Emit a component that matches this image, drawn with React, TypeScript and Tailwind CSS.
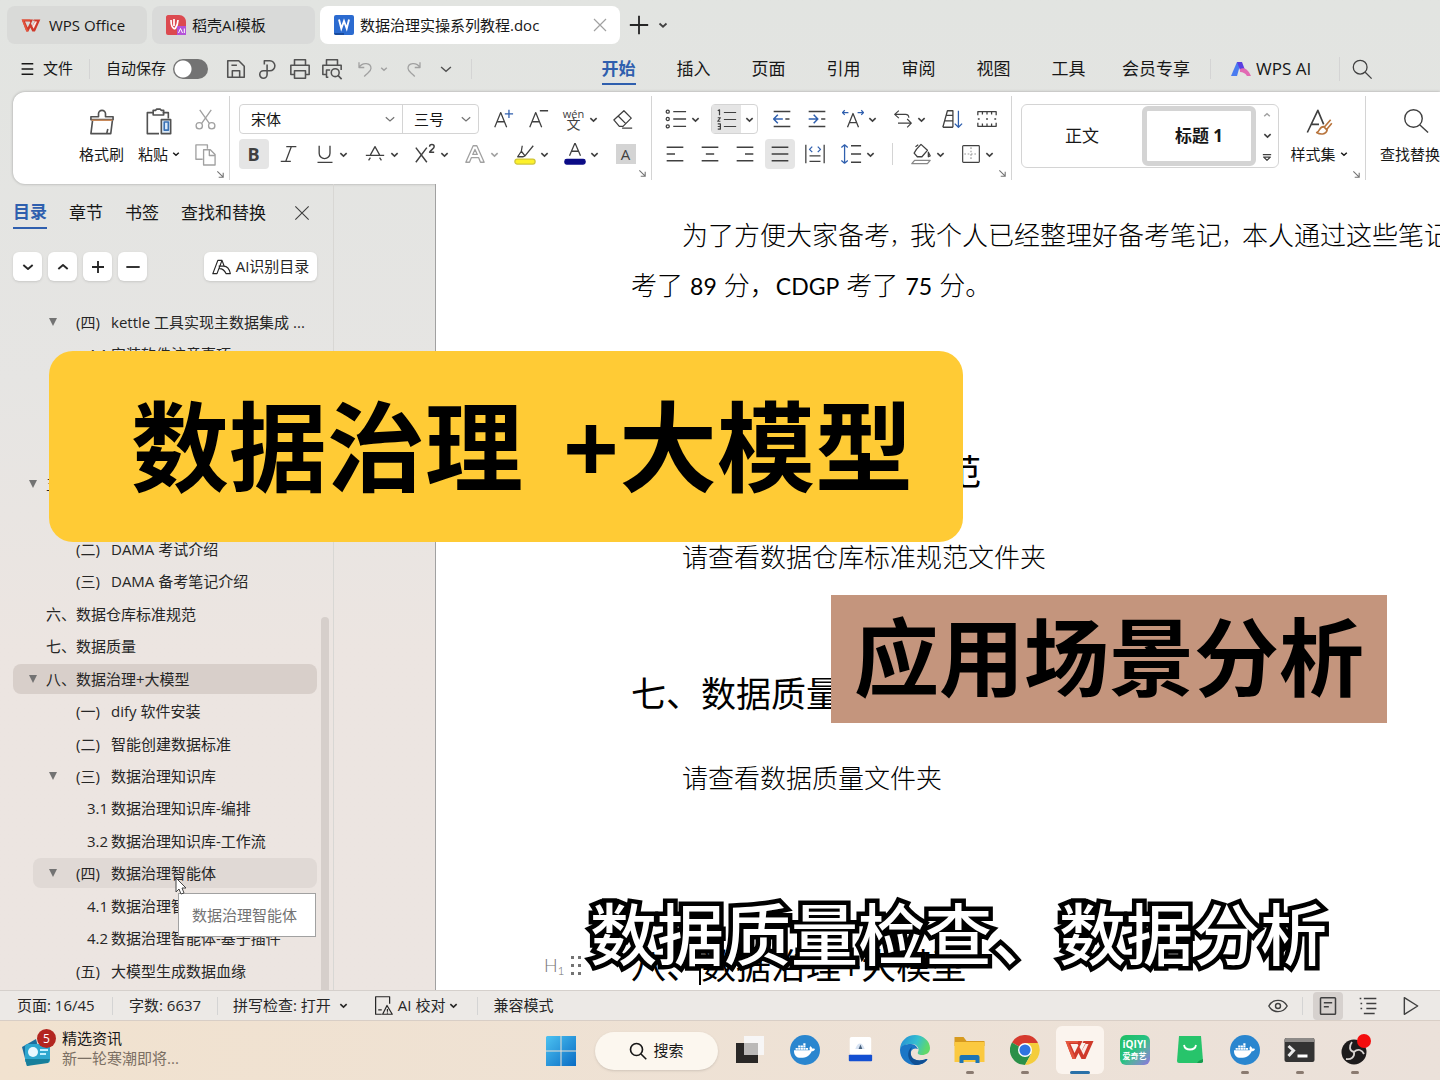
import type { ReactNode } from "react";
import { FaDocker } from "react-icons/fa";

type IconProps = {
	children: ReactNode;
	className?: string;
};

// 24 grid line icon
function Icon({ children, className = "size-[22px]" }: IconProps) {
	return (
		<svg
			viewBox="0 0 24 24"
			className={`shrink-0 ${className}`}
			fill="none"
			stroke="currentColor"
			strokeWidth="1.4"
			strokeLinejoin="round"
			aria-hidden="true"
		>
			{children}
		</svg>
	);
}

function Caret({ className = "size-[9px]" }: { className?: string }) {
	return (
		<svg
			viewBox="0 0 10 10"
			className={`shrink-0 ${className}`}
			fill="none"
			stroke="currentColor"
			strokeWidth="1.8"
			aria-hidden="true"
		>
			<path d="M1.5 3.5 5 6.7l3.5-3.2" />
		</svg>
	);
}

type ToolProps = {
	label: string;
	children: ReactNode;
	caret?: boolean;
	active?: boolean;
	muted?: boolean;
};

function Tool({ label, children, caret, active, muted }: ToolProps) {
	return (
		<button
			type="button"
			aria-label={label}
			className={`flex h-[30px] shrink-0 items-center justify-center gap-1 ${
				caret ? "w-[50px]" : "w-[35px]"
			} ${muted ? "text-neutral-400" : "text-neutral-700"}`}
		>
			<span
				className={`flex items-center justify-center rounded ${
					active ? "size-[30px] bg-neutral-200" : ""
				}`}
			>
				{children}
			</span>
			{caret && <Caret />}
		</button>
	);
}

function Corner() {
	return (
		<svg
			viewBox="0 0 10 10"
			className="mr-1 size-[9px] self-end text-neutral-500"
			fill="none"
			stroke="currentColor"
			strokeWidth="1.2"
			aria-hidden="true"
		>
			<path d="M1.5 1.5 8 8M8 3v5H3" />
		</svg>
	);
}

function Divider({ className = "h-6" }: { className?: string }) {
	return <div className={`w-px shrink-0 bg-neutral-300 ${className}`} />;
}

function WpsMark({ className }: { className: string }) {
	return (
		<svg viewBox="0 0 30 22" className={className} aria-hidden="true">
			<path
				d="M1 2h17l-3 6-2-3H6l4 9 4-8 3 6 4-8h-3l1-2h10l-8 18h-4l-3-6-3 6H8z"
				fill="#cf3a2b"
			/>
			<path d="m17 12 2 4 5-11h-3z" fill="#fbe9e5" />
			<path d="m1 2 7 18h3L4 4h9l1-2z" fill="#e5573f" />
		</svg>
	);
}

function TopTabs() {
	return (
		<div className="flex h-12 shrink-0 items-center gap-[5px] px-[7px] pt-0.5 text-[15px]">
			<button
				type="button"
				className="flex h-[38px] w-[140px] items-center gap-2 rounded-lg bg-[#d9dad8] pl-[14px]"
			>
				<WpsMark className="h-[15px] w-5" />
				WPS Office
			</button>
			<button
				type="button"
				className="flex h-[38px] w-[163px] items-center gap-[6px] rounded-lg bg-[#d9dad9] pl-[14px]"
			>
				<svg viewBox="0 0 20 20" className="size-5" aria-hidden="true">
					<path d="M2 0h11c4 0 7 3 7 7v13H2a2 2 0 0 1-2-2V2c0-1 1-2 2-2z" fill="#dc4a50" />
					<path d="M11 11h9v9h-9z" fill="#b453d8" />
					<path
						d="M5 5c0 6 1 8 4 9M8 4v7M12 5c0 3-1 6-3 9"
						stroke="#fff"
						strokeWidth="1.7"
						fill="none"
					/>
					<path d="m12.500 18 2-4.500 2 4.500M18.300 13.500V18" stroke="#fff" fill="none" />
				</svg>
				稻壳AI模板
			</button>
			<div className="flex h-[38px] w-[300px] items-center rounded-lg bg-white pl-[14px] pr-3">
				<svg viewBox="0 0 20 20" className="mr-[6px] size-5" aria-hidden="true">
					<rect width="20" height="20" rx="2" fill="#2b6bd0" />
					<path d="M0 18h10v2H2a2 2 0 0 1-2-2z" fill="#184a9c" />
					<path
						d="m5 4.500 2.300 9L10 6l2.700 7.500 2.300-9"
						stroke="#fff"
						strokeWidth="1.900"
						fill="none"
					/>
				</svg>
				<span className="flex-1 whitespace-nowrap">数据治理实操系列教程.doc</span>
				<button type="button" aria-label="关闭标签" className="text-neutral-400">
					<Icon className="size-4">
						<path d="m3 3 18 18M21 3 3 21" strokeWidth="1.800" />
					</Icon>
				</button>
			</div>
			<button type="button" aria-label="新建" className="ml-[3px] text-neutral-800">
				<Icon className="size-[22px]">
					<path d="M12 2v20M2 12h20" strokeWidth="2" />
				</Icon>
			</button>
			<button type="button" aria-label="标签列表" className="ml-[3px] text-neutral-700">
				<Caret className="size-[10px]" />
			</button>
		</div>
	);
}

const menus = ["开始", "插入", "页面", "引用", "审阅", "视图", "工具"];

function MenuBar() {
	return (
		<div className="flex h-11 shrink-0 items-center pb-[3px] text-[17px]">
			<button type="button" className="ml-[21px] flex items-center gap-2 text-[15px]">
				<Icon className="size-[14px]">
					<path d="M1 3h20M1 12h20M1 21h20" strokeWidth="2.200" />
				</Icon>
				文件
			</button>
			<Divider className="ml-4 h-5" />
			<label htmlFor="autosave" className="ml-4 text-[15px]">
				自动保存
			</label>
			<input
				id="autosave"
				type="checkbox"
				role="switch"
				className="ml-[7px] h-5 w-[35px] appearance-none rounded-full bg-neutral-500 bg-[radial-gradient(circle_at_10px_10px,white_8px,transparent_9px)]"
			/>
			<div className="ml-3 flex items-center text-neutral-600">
				<button type="button" aria-label="保存" className="flex w-8 justify-center">
					<Icon>
						<path d="M3 21V3h12l6 6v12zM8 21v-7h8v7M7 8h6" strokeWidth="1.700" />
					</Icon>
				</button>
				<button type="button" aria-label="输出为PDF" className="flex w-8 justify-center">
					<Icon>
						<path
							d="M8 7V3h6a5 5 0 0 1 0 11h-4M11 7v11a4 4 0 1 1-4-4h5"
							strokeWidth="1.700"
						/>
					</Icon>
				</button>
				<button type="button" aria-label="打印" className="flex w-8 justify-center">
					<Icon>
						<path d="M6 8V2h12v6M6 18H2V8h20v10h-4M6 14h12v8H6z" strokeWidth="1.700" />
					</Icon>
				</button>
				<button type="button" aria-label="打印预览" className="flex w-8 justify-center">
					<Icon>
						<path d="M6 8V2h12v6M6 18H2V8h20v5M8 21H6v-8h4" strokeWidth="1.700" />
						<circle cx="15.500" cy="16" r="4.300" strokeWidth="1.700" />
						<path d="m18.500 19 4 4" strokeWidth="1.700" />
					</Icon>
				</button>
				<button
					type="button"
					aria-label="撤销"
					className="ml-2 flex w-[34px] items-center gap-1.5 text-neutral-400"
				>
					<Icon className="size-[18px]">
						<path d="M4 3v7h7M4 10c5-8 16-6 16 1 0 5-5 6-9 11" strokeWidth="1.700" />
					</Icon>
					<Caret className="size-2" />
				</button>
				<button
					type="button"
					aria-label="恢复"
					className="ml-3 flex w-6 justify-center text-neutral-400"
				>
					<Icon className="size-[18px]">
						<path d="M20 3v7h-7M20 10C15 2 4 4 4 11c0 5 5 6 9 11" strokeWidth="1.700" />
					</Icon>
				</button>
				<button type="button" aria-label="更多" className="ml-2 flex w-6 justify-center">
					<Caret className="size-[14px] stroke-1" />
				</button>
				<Divider className="ml-[13px] h-5" />
			</div>
			<nav className="ml-[109px] flex items-center">
				{menus.map((m, i) => (
					<button type="button" key={m} className="flex w-[75px] justify-center">
						<span
							className={
								i === 0
									? "-mb-1 border-b-2 border-[#2f5fae] pb-0.5 font-bold leading-6 text-[#2f5fae]"
									: ""
							}
						>
							{m}
						</span>
					</button>
				))}
				<button type="button" className="w-[100px] text-center">
					会员专享
				</button>
			</nav>
			<Divider className="ml-1 h-5" />
			<button type="button" className="ml-5 flex items-center gap-[5px] whitespace-nowrap">
				<svg viewBox="0 0 20 16" className="h-4 w-5" aria-hidden="true">
					<path d="M6 1h4l-4 14H0z" fill="#4a7cf0" />
					<path d="M6 1h5l3 8H9z" fill="#5a3fe0" />
					<path d="M9 8c4-2 8 0 11 7h-4c-2-3-4-4-7-4z" fill="#e26ab4" />
				</svg>
				WPS AI
			</button>
			<Divider className="ml-7 h-6" />
			<button type="button" aria-label="搜索" className="ml-[11px] text-neutral-700">
				<Icon>
					<circle cx="10" cy="10" r="7.500" />
					<path d="m15.500 15.500 7 7" />
				</Icon>
			</button>
		</div>
	);
}

function Ribbon() {
	return (
		<div className="ml-[13px] flex h-[92px] shrink-0 overflow-hidden rounded-l-xl bg-white text-[15px] shadow-[0_0_3px_rgba(0,0,0,0.3)]">
			<div className="flex w-[216px] shrink-0 flex-col pt-3">
				<div className="flex h-[66px] pl-[62px]">
					<button type="button" className="flex w-[53px] flex-col items-center gap-2">
						<Icon className="mt-1 size-[28px] text-neutral-600">
							<path d="M2.500 10V7.500h6.500V5a3 3 0 0 1 6 0v2.500h6.500V10zM4 10 2.500 22h17L21 10M16 22l1-4" />
							<path d="M3 10.500h18" stroke="#c98a5b" />
						</Icon>
						<span className="leading-5">格式刷</span>
					</button>
					<button type="button" className="ml-[3px] flex w-[56px] flex-col items-center gap-2">
						<Icon className="mt-1 size-[28px] text-neutral-600">
							<path d="M7 4H2v18h10M15 4h5v5M7 2h2l1-1h3l1 1h2v4H7z" />
							<rect x="14" y="10" width="8" height="12" fill="#dcebfa" />
							<rect x="16.500" y="12" width="3.500" height="7" stroke="#3a72b5" />
						</Icon>
						<span className="flex items-center gap-1 whitespace-nowrap leading-5">
							粘贴
							<Caret className="size-2" />
						</span>
					</button>
					<div className="flex flex-col gap-[5px] text-neutral-400">
						<button type="button" aria-label="剪切" className="flex h-[30px] w-9 items-center justify-center">
							<Icon className="size-[23px]">
								<path d="m6 2 10 14M18 2 8 16" />
								<circle cx="5.500" cy="18.500" r="3.300" />
								<circle cx="18.500" cy="18.500" r="3.300" />
							</Icon>
						</button>
						<button type="button" aria-label="复制" className="flex h-[30px] w-9 items-center justify-center">
							<Icon className="size-[23px]">
								<path d="M9 17H2V2h12v4M10 7h7l5 5v11H10zM16 7v6h6" />
							</Icon>
						</button>
					</div>
				</div>
				<Corner />
			</div>
			<Divider className="mt-1 h-[84px]" />
			<div className="flex w-[421px] shrink-0 flex-col pl-[9px] pt-3">
				<div className="mb-[5px] flex h-[30px]">
					<div className="mr-[6px] flex h-[30px] w-[240px] rounded border border-neutral-300">
						<div className="flex w-[163px] items-center border-r border-neutral-300 pr-[6px]">
							<select aria-label="字体" className="flex-1 appearance-none pl-[11px] outline-none">
								<option>宋体</option>
							</select>
							<Caret className="size-3 stroke-1 text-neutral-500" />
						</div>
						<div className="flex flex-1 items-center pr-[6px]">
							<select aria-label="字号" className="w-12 flex-1 appearance-none pl-[11px] outline-none">
								<option>三号</option>
							</select>
							<Caret className="size-3 stroke-1 text-neutral-500" />
						</div>
					</div>
					<Tool label="增大字号">
						<Icon>
							<path d="m3 21 6.500-16L16 21M5.500 15h8" />
							<path d="M18.500 2v9M14 6.500h9" stroke="#2f5fae" />
						</Icon>
					</Tool>
					<Tool label="减小字号">
						<Icon>
							<path d="m3 21 6.500-16L16 21M5.500 15h8M14 3h9" />
						</Icon>
					</Tool>
					<Tool label="拼音指南" caret>
						<span className="flex w-[22px] flex-col items-center text-[11px] leading-[9px]">
							<span>wén</span>
							<span className="text-[14px] leading-3">文</span>
						</span>
					</Tool>
					<Tool label="清除格式">
						<Icon>
							<path d="m2 13 11-10 8 8-9 9H8zM7 9l8 8M11 22h11" />
						</Icon>
					</Tool>
				</div>
				<div className="-ml-[3px] flex h-[30px]">
					<Tool label="加粗" active>
						<span className="text-[18px] font-bold">B</span>
					</Tool>
					<Tool label="倾斜">
						<Icon>
							<path d="M9 4h11M3 20h11M14.500 4l-6 16" />
						</Icon>
					</Tool>
					<Tool label="下划线" caret>
						<Icon className="size-[20px]">
							<path d="M5 2v9a6.500 6.500 0 0 0 13 0V2M3 22h18" strokeWidth="1.600" />
						</Icon>
					</Tool>
					<Tool label="删除线" caret>
						<Icon>
							<path d="m7 13 5-9 5 9M5 19l2-3M19 19l-2-3M2 13.500h20" />
						</Icon>
					</Tool>
					<Tool label="上标" caret>
						<Icon>
							<path d="m2 5 12 16M14 5 2 21M17 4c0-3 5-3 5 0 0 2-3 3-5 6h5" strokeWidth="1.600" />
						</Icon>
					</Tool>
					<Tool label="文字效果" caret muted>
						<Icon>
							<path d="M2 21 10 3h4l8 18h-4l-2-5H8l-2 5zM9.500 12.500h5L12 7z" />
						</Icon>
					</Tool>
					<Tool label="突出显示" caret>
						<Icon>
							<path d="m8 9 4 5 9-11M8 9l-4 6h6l2-1M9 3 8 9" />
							<rect x="1" y="17.500" width="22" height="5.500" rx="2.500" fill="#fdf12a" stroke="#cfc53a" />
						</Icon>
					</Tool>
					<Tool label="字体颜色" caret>
						<Icon>
							<path d="m6 14 6-14 6 14M8.500 9h7" />
							<rect x="1" y="18" width="22" height="5" rx="2" fill="#0b0b86" stroke="#0b0b86" />
						</Icon>
					</Tool>
					<Tool label="字符底纹">
						<span className="ml-1 flex size-5 items-center justify-center bg-neutral-300 text-[15px]">
							A
						</span>
					</Tool>
				</div>
				<Corner />
			</div>
			<Divider className="mt-1 h-[84px]" />
			<div className="flex w-[359px] shrink-0 flex-col pl-[5px] pt-3">
				<div className="mb-[5px] flex h-[30px]">
					<Tool label="项目符号" caret>
						<Icon>
							<path d="M9 4h14M9 12h14M9 20h14" />
							<circle cx="3" cy="4" r="1.700" />
							<circle cx="3" cy="12" r="1.700" />
							<circle cx="3" cy="20" r="1.700" />
						</Icon>
					</Tool>
					<button
						type="button"
						aria-label="编号"
						className="ml-1 mr-[6px] flex h-[30px] w-[47px] items-center rounded border border-neutral-300 text-neutral-700"
					>
						<span className="flex h-full w-[29px] items-center justify-center bg-neutral-200">
							<Icon className="size-[21px]">
								<path d="M9 4h14M9 12h14M9 20h14M2 2l2-1v6M2 10h3l-3 4h3M2 17h3v6H2M2 20h3" />
							</Icon>
						</span>
						<Caret className="ml-1 size-[9px]" />
					</button>
					<Tool label="减少缩进">
						<Icon className="size-5">
							<path d="M2 3h20M16 12h5M2 21h20" strokeWidth="1.800" />
							<path d="M13 12H2m5-5-5 5 5 5" stroke="#2f5fae" strokeWidth="1.800" />
						</Icon>
					</Tool>
					<Tool label="增加缩进">
						<Icon className="size-5">
							<path d="M2 3h20M17 12h5M2 21h20" strokeWidth="1.800" />
							<path d="M2 12h11M8 7l5 5-5 5" stroke="#2f5fae" strokeWidth="1.800" />
						</Icon>
					</Tool>
					<Tool label="中文版式" caret>
						<Icon>
							<path d="m6 21 6-15 6 15M8 16h8" />
							<path d="M1 5h6M3 2.500.500 5 3 7.500M17 5h6M21 2.500 23.500 5 21 7.500" stroke="#2f5fae" />
						</Icon>
					</Tool>
					<Tool label="换行" caret>
						<Icon className="size-[20px]">
							<path d="M7 2 2 6.500 7 11M2 6.500h13a4 4 0 0 1 4 4M17 12l5 5-5 5M22 17H6" />
						</Icon>
					</Tool>
					<Tool label="排序">
						<Icon>
							<path d="M2 21 7 3h6v18M4 14h9M2 21h11M6 8h7" />
							<path d="M19 3v18m-4-4 4 4 4-4" stroke="#2f5fae" />
						</Icon>
					</Tool>
					<Tool label="制表位">
						<Icon>
							<path d="M2 8V4h20v4M2 16v4h20v-4M7 4v3M12 4v3M17 4v3M7 20v-3M12 20v-3M17 20v-3M2 12h2M11 12h2M20 12h2" />
						</Icon>
					</Tool>
				</div>
				<div className="flex h-[30px]">
					<Tool label="左对齐">
						<Icon className="size-5">
							<path d="M2 4h20M2 12h10M2 20h20" strokeWidth="1.800" />
						</Icon>
					</Tool>
					<Tool label="居中">
						<Icon className="size-5">
							<path d="M2 4h20M7 12h10M2 20h20" strokeWidth="1.800" />
						</Icon>
					</Tool>
					<Tool label="右对齐">
						<Icon className="size-5">
							<path d="M2 4h20M12 12h10M2 20h20" strokeWidth="1.800" />
						</Icon>
					</Tool>
					<Tool label="两端对齐" active>
						<Icon className="size-5">
							<path d="M2 4h20M2 12h20M2 20h20" strokeWidth="1.800" />
						</Icon>
					</Tool>
					<Tool label="分散对齐">
						<Icon>
							<path d="M2 2v20M22 2v20M6 14h12M6 20h12" />
							<path d="m9 4-3 3 3 3M15 4l3 3-3 3" stroke="#2f5fae" />
						</Icon>
					</Tool>
					<Tool label="行距" caret>
						<Icon>
							<path d="M12 3h11M12 12h11M12 21h11" />
							<path d="M5 2v20M1.500 5 5 2l3.500 3M1.500 19 5 22l3.500-3" stroke="#2f5fae" />
						</Icon>
					</Tool>
					<div className="flex w-5 items-center justify-center">
						<Divider className="h-[22px]" />
					</div>
					<Tool label="底纹颜色" caret>
						<Icon>
							<path d="M7 7 12 1.500l7 6.500-6 7H8L4.500 11 7 7M6 4l3-2M20 10l2 4-2 1z" />
							<path d="M2 22.500 5 19h17l-3 3.500z" stroke="#888" />
						</Icon>
					</Tool>
					<Tool label="边框" caret>
						<Icon className="size-5">
							<rect x="2" y="2" width="20" height="20" rx="1" />
							<path d="M12 4v16M4 12h16" strokeDasharray="2 2" stroke="#999" />
						</Icon>
					</Tool>
				</div>
				<Corner />
			</div>
			<Divider className="mt-1 h-[84px]" />
			<div className="flex w-[353px] shrink-0 flex-col pl-[9px] pt-3">
				<div className="flex h-[66px]">
					<div className="flex h-16 w-[258px] items-center rounded-md border border-neutral-300 text-[17px]">
						<button type="button" className="w-[120px] text-center">
							正文
						</button>
						<button
							type="button"
							className="h-[60px] w-[114px] rounded-md border-[5px] border-neutral-300 font-bold"
						>
							标题 1
						</button>
						<div className="flex flex-1 flex-col items-center gap-3 text-neutral-700">
							<Caret className="size-2 rotate-180 text-neutral-400" />
							<Caret className="size-[9px]" />
							<Icon className="size-[10px]">
								<path d="M2 6h20M4 12h16l-8 8z" strokeWidth="3" />
							</Icon>
						</div>
					</div>
					<button type="button" className="ml-[10px] flex w-[60px] flex-col items-center gap-2">
						<Icon className="mt-1 size-[28px] text-neutral-700">
							<path d="M2 21 11 2l5 12M5 14h7" />
							<path d="m22 10-6 7M23 13l-5 6M16 16c-4 0-3 4-6 5 3 2 8 2 9-2z" stroke="#b8743c" />
						</Icon>
						<span className="flex items-center gap-1 whitespace-nowrap leading-5">
							样式集
							<Caret className="size-2" />
						</span>
					</button>
				</div>
				<Corner />
			</div>
			<Divider className="mt-1 h-[84px]" />
			<button
				type="button"
				className="ml-[14px] flex w-[74px] shrink-0 flex-col items-center gap-2 pt-3"
			>
				<Icon className="mt-1 size-[28px] text-neutral-700">
					<circle cx="9" cy="9" r="7.500" strokeWidth="1.200" />
					<path d="m14.500 14.500 7 6.500" strokeWidth="1.200" />
				</Icon>
				<span className="flex items-center gap-[5px] whitespace-nowrap leading-5">
					查找替换
					<Caret />
				</span>
			</button>
		</div>
	);
}

type OutlineItem = {
	level: 1 | 2 | 3;
	no?: string;
	text?: string;
	open?: boolean;
	state?: "current" | "hover";
};

const outline: OutlineItem[] = [
	{ level: 2, no: "(四)", text: "kettle 工具实现主数据集成 ...", open: true },
	{ level: 3, no: "4.1", text: "安装软件注意事项" },
	{ level: 3 },
	{ level: 3 },
	{ level: 2 },
	{ level: 1, no: "五、", open: true },
	{ level: 2 },
	{ level: 2, no: "(二)", text: "DAMA 考试介绍" },
	{ level: 2, no: "(三)", text: "DAMA 备考笔记介绍" },
	{ level: 1, no: "六、", text: "数据仓库标准规范" },
	{ level: 1, no: "七、", text: "数据质量" },
	{ level: 1, no: "八、", text: "数据治理+大模型", open: true, state: "current" },
	{ level: 2, no: "(一)", text: "dify 软件安装" },
	{ level: 2, no: "(二)", text: "智能创建数据标准" },
	{ level: 2, no: "(三)", text: "数据治理知识库", open: true },
	{ level: 3, no: "3.1", text: "数据治理知识库-编排" },
	{ level: 3, no: "3.2", text: "数据治理知识库-工作流" },
	{ level: 2, no: "(四)", text: "数据治理智能体", open: true, state: "hover" },
	{ level: 3, no: "4.1", text: "数据治理智能体-知识库" },
	{ level: 3, no: "4.2", text: "数据治理智能体-基于插件" },
	{ level: 2, no: "(五)", text: "大模型生成数据血缘" },
];

const indent = { 1: "pl-[14px]", 2: "ml-5 pl-[14px]", 3: "ml-5 pl-[54px]" };
const noWidth = { 1: "w-[30px]", 2: "w-[35px]", 3: "w-[24px]" };
const arrowGap = { 1: "mr-[7px]", 2: "mr-[17px]", 3: "mr-[17px]" };
const rowState = { current: "bg-[#d8cfca]", hover: "bg-[#e0d9d5]", none: "" };

function Sidebar() {
	return (
		<aside className="flex w-[334px] shrink-0 flex-col border-r border-[#d8d7d4] pl-[13px]">
			<div className="mt-[13px] flex h-8 items-center gap-[22px] text-[17px]">
				<button
					type="button"
					className="border-b-2 border-[#2f5fae] font-bold leading-[30px] text-[#2f5fae]"
				>
					目录
				</button>
				<button type="button">章节</button>
				<button type="button">书签</button>
				<button type="button">查找和替换</button>
				<button type="button" aria-label="关闭" className="ml-[6px] text-neutral-700">
					<Icon className="size-4">
						<path d="m2 2 20 20M22 2 2 22" strokeWidth="1.700" />
					</Icon>
				</button>
			</div>
			<div className="mr-4 mt-[23px] flex h-[29px] items-center gap-[6px] text-neutral-800">
				{[
					["展开", "m5 9 7 6 7-6"],
					["收起", "m5 15 7-6 7 6"],
					["升级", "M12 3v18M3 12h18"],
					["降级", "M2 12h20"],
				].map(([label, d]) => (
					<button
						type="button"
						key={label}
						aria-label={label}
						className="flex size-[29px] items-center justify-center rounded-md bg-white shadow-sm"
					>
						<Icon className="size-4">
							<path d={d} strokeWidth="2.800" />
						</Icon>
					</button>
				))}
				<button
					type="button"
					className="ml-auto flex h-[29px] w-[113px] items-center justify-center gap-1 whitespace-nowrap rounded-md bg-white text-[15px] shadow-sm"
				>
					<Icon className="size-5">
						<path d="M7 4h5L6 20H1zM12 4l3 8M8 11h6c4 0 7 4 8 9h-5c-2-4-4-6-8-6" />
					</Icon>
					AI识别目录
				</button>
			</div>
			<div className="mt-[25px] flex min-h-0 flex-1">
				<ul className="grid flex-1 auto-rows-fr pb-[3px] text-[15px] text-neutral-800">
					{outline.map((item, i) => (
						<li key={i} className="flex items-center">
							<div
								className={`flex h-[30px] flex-1 items-center whitespace-nowrap rounded-lg ${
									indent[item.level]
								} ${rowState[item.state ?? "none"]}`}
							>
								{item.level < 3 && (
									<svg
										viewBox="0 0 10 8"
										className={`h-2 w-3 shrink-0 ${arrowGap[item.level]} ${
											item.open ? "text-neutral-500" : "text-transparent"
										}`}
										fill="currentColor"
										aria-hidden="true"
									>
										<path d="M1 0h8L5 8z" />
									</svg>
								)}
								{item.no && (
									<span className={`shrink-0 ${noWidth[item.level]}`}>{item.no}</span>
								)}
								<span>{item.text}</span>
							</div>
						</li>
					))}
				</ul>
				<div className="mx-1 flex w-2 flex-col justify-end">
					<div className="h-[373px] rounded-t-full bg-[#d6cfcb]" />
				</div>
			</div>
		</aside>
	);
}

function Doc() {
	return (
		<main className="ml-[101px] flex-1 overflow-hidden border-l border-neutral-400 bg-white pl-[195px] font-['Lato','Noto_Sans_CJK_SC',sans-serif] text-[26px] font-light text-black">
			<p className="mt-[26px] whitespace-nowrap pl-[51px] leading-[50px]">
				为了方便大家备考<span className="text-[20px] leading-none">，</span>
				我个人已经整理好备考笔记<span className="text-[20px] leading-none">，</span>
				本人通过这些笔记
			</p>
			<p className="whitespace-nowrap leading-[50px]">
				考了 <span className="text-[23px] font-normal leading-none">89</span> 分，
				<span className="text-[23px] font-normal leading-none">CDGP</span> 考了{" "}
				<span className="text-[23px] font-normal leading-none">75</span> 分。
			</p>
			<h1 className="mt-[136px] whitespace-nowrap text-[35px] font-normal leading-[50px]">
				六、数据仓库标准规范
			</h1>
			<p className="mt-[36px] whitespace-nowrap pl-[51px] leading-[50px]">
				请查看数据仓库标准规范文件夹
			</p>
			<h1 className="mt-[86px] whitespace-nowrap text-[35px] font-normal leading-[50px]">
				七、数据质量
			</h1>
			<p className="mt-[35px] whitespace-nowrap pl-[51px] leading-[50px]">
				请查看数据质量文件夹
			</p>
			<div className="-ml-[87px] mt-[137px] flex items-center">
				<span className="w-[26px] text-[18px] text-neutral-500">
					H<sub className="text-[12px]">1</sub>
				</span>
				<svg viewBox="0 0 12 20" className="mr-[49px] h-5 w-3 fill-neutral-500" aria-hidden="true">
					{[2, 10, 18].map((y) => (
						<path key={y} d={`M1 ${y - 1}h3v3H1zM8 ${y - 1}h3v3H8z`} />
					))}
				</svg>
				<h1 className="flex items-center whitespace-nowrap text-[35px] font-normal leading-[50px]">
					八、
					<span className="-ml-0.5 h-10 w-0.5 bg-black" />
					数据治理+大模型
				</h1>
			</div>
		</main>
	);
}

function StatusBar() {
	return (
		<footer className="flex h-[30px] shrink-0 items-center whitespace-nowrap border-t border-[#d5d0cc] bg-[#ece9e6] pl-[17px] text-[15px] text-neutral-800">
			<span className="w-[95px]">页面: 16/45</span>
			<Divider className="h-[18px]" />
			<span className="ml-4 w-[88px]">字数: 6637</span>
			<Divider className="h-[18px]" />
			<button type="button" className="ml-[15px] flex items-center gap-2">
				拼写检查: 打开 <Caret />
			</button>
			<button type="button" className="ml-[25px] flex items-center gap-1">
				<Icon className="size-[21px]">
					<path d="M10 22H3V2h16v8M8 22H3M6 17h4M16 12l-5 10h11zM16.500 16v3M16.500 20v1" />
				</Icon>
				AI 校对 <Caret />
			</button>
			<Divider className="ml-[19px] h-[18px]" />
			<span className="ml-[15px]">兼容模式</span>
			<div className="ml-auto flex items-center pr-[19px] text-neutral-700">
				<button type="button" aria-label="护眼模式" className="mr-[14px]">
					<Icon className="size-5">
						<path d="M1 12c5-9 17-9 22 0-5 9-17 9-22 0z" strokeWidth="1.700" />
						<circle cx="12" cy="12" r="3" strokeWidth="1.700" />
					</Icon>
				</button>
				<Divider className="h-[18px]" />
				<button
					type="button"
					aria-label="页面视图"
					className="ml-[10px] flex h-7 w-[30px] items-center justify-center rounded bg-[#d6d1ce]"
				>
					<Icon className="size-[20px]">
						<rect x="3" y="2" width="18" height="20" rx="1" strokeWidth="1.800" />
						<path d="M7 8h10M7 13h6" strokeWidth="1.800" />
					</Icon>
				</button>
				<button type="button" aria-label="大纲视图" className="ml-[15px]">
					<Icon className="size-5">
						<path d="M7 3h15M10 9h12M10 15h12M7 21h13M2 3h2M3 9h2M3 15h2" strokeWidth="1.700" />
					</Icon>
				</button>
				<button type="button" aria-label="播放" className="ml-[23px]">
					<Icon className="size-5">
						<path d="M4 2v20l16-10z" strokeWidth="1.700" />
					</Icon>
				</button>
			</div>
		</footer>
	);
}

type AppIconProps = {
	name: string;
	children: ReactNode;
	running?: boolean;
	focused?: boolean;
};

function AppIcon({ name, children, running, focused }: AppIconProps) {
	return (
		<button
			type="button"
			aria-label={name}
			className="flex h-full w-[55px] shrink-0 items-center justify-center pb-0.5"
		>
			<span
				className={`flex h-[48px] w-[48px] flex-col items-center justify-between rounded-md pt-[9px] ${
					focused ? "bg-[#fbf4ee]" : ""
				}`}
			>
				<span className="flex h-[31px] items-center justify-center">{children}</span>
				<span
					className={`h-[3px] rounded-full ${focused ? "w-5 bg-[#2a71a8]" : "w-2"} ${
						running ? "bg-[#8a7a70]" : ""
					}`}
				/>
			</span>
		</button>
	);
}

function DockerIcon() {
	return (
		<span className="flex size-[30px] items-center justify-center rounded-full bg-[#2a86cf] text-white">
			<FaDocker className="size-[21px]" />
		</span>
	);
}

function Taskbar() {
	return (
		<div className="flex h-[60px] shrink-0 items-center border-t border-[#d8cec6] bg-linear-to-r from-[#f1e2cf] to-[#ebe1da] text-[15px]">
			<button
				type="button"
				className="flex w-[533px] shrink-0 items-center pb-[5px] pl-[22px] text-left"
			>
				<span className="relative mr-[10px] mt-1 flex h-[34px] w-[30px] items-end">
					<svg viewBox="0 0 28 30" className="h-[30px] w-7" aria-hidden="true">
						<path d="M0 10 14 2l6 22L5 29z" fill="#1b6f9f" />
						<rect x="3" y="7" width="25" height="19" rx="3" fill="#2ea7cf" />
						<path d="M5 29 3 22h25l-2 4z" fill="#177f9b" />
						<circle cx="11" cy="15" r="5" fill="#e8f8ff" />
						<path d="M18 13h8M18 17h6" stroke="#bfefff" strokeWidth="2" />
					</svg>
					<span className="absolute -right-1 -top-1 flex size-[19px] items-center justify-center rounded-full bg-[#b3261f] text-[12px] text-white">
						5
					</span>
				</span>
				<span className="leading-5">
					<span className="block text-neutral-900">精选资讯</span>
					<span className="block text-[#7b6f63]">新一轮寒潮即将...</span>
				</span>
			</button>
			<button type="button" aria-label="开始菜单" className="flex w-[56px] justify-center">
				<svg viewBox="0 0 30 30" className="size-[30px]" aria-hidden="true">
					<defs>
						<linearGradient id="win" x1="0" y1="0" x2="1" y2="1">
							<stop offset="0" stopColor="#4cc2f1" />
							<stop offset="1" stopColor="#0a6cc4" />
						</linearGradient>
					</defs>
					<path
						d="M1 0h13.500v14.500H0V1zM15.500 0H30v14.500H15.500zM0 15.500h14.500V30H0zM15.500 15.500H30V30H15.500z"
						fill="url(#win)"
					/>
				</svg>
			</button>
			<button
				type="button"
				className="ml-[6px] mr-1 flex h-[38px] w-[123px] shrink-0 items-center justify-center gap-[6px] rounded-full bg-[#fcf7ef] shadow-sm"
			>
				<Icon className="size-[18px]">
					<circle cx="10" cy="10" r="8" strokeWidth="2.200" />
					<path d="m16 16 7 7" strokeWidth="2.200" />
				</Icon>
				搜索
			</button>
			<AppIcon name="任务视图">
				<svg viewBox="0 0 30 30" className="size-[30px]" aria-hidden="true">
					<path d="M9 1h20v19H9z" fill="#f7f6f6" />
					<path d="M1 8h22v20H1z" fill="#2a2827" />
					<path d="M9 8h14v12H9z" fill="#bbb9b8" />
				</svg>
			</AppIcon>
			<AppIcon name="Docker">
				<DockerIcon />
			</AppIcon>
			<AppIcon name="网盘">
				<svg viewBox="0 0 30 30" className="size-[28px]" aria-hidden="true">
					<rect x="4" y="1" width="23" height="19" rx="2" fill="#fff" />
					<path d="M10 14c1-4 3-6 5-6s4 2 5 6z" fill="#d7e3f3" />
					<path d="m15.500 9 2 5h-4z" fill="#49617d" />
					<rect x="3" y="20" width="25" height="7" rx="1" fill="#1450d2" />
				</svg>
			</AppIcon>
			<AppIcon name="Edge">
				<svg viewBox="0 0 30 30" className="size-[30px]" aria-hidden="true">
					<defs>
						<linearGradient id="edgeTop" x1="0" y1="0" x2="1" y2="0.300">
							<stop offset="0" stopColor="#2389d6" />
							<stop offset="0.600" stopColor="#35bfd0" />
							<stop offset="1" stopColor="#5fd86b" />
						</linearGradient>
					</defs>
					<path
						d="M0 15C0 6 7 0 15 0s15 6 15 13c0 5-4 7-8 7-3 0-5-1-4-3 2-3-1-8-6-8-7 0-12 3-12 6z"
						fill="url(#edgeTop)"
					/>
					<path d="M0 15c0-4 5-6 11-6 4 0 6 3 7 5-5-2-8 2-7 6 1 5 8 7 15 4 1 0 2 0 1 1-2 3-7 5-12 5C6 30 0 23 0 15z" fill="#1b76c6" />
					<path d="M12 12c-6 4-5 14 3 18 5 0 10-2 12-5 1-1 0-1-1-1-7 3-14 1-15-4-1-3 0-6 1-8z" fill="#0f4f94" />
				</svg>
			</AppIcon>
			<AppIcon name="文件资源管理器" running>
				<svg viewBox="0 0 30 28" className="h-[28px] w-[31px]" aria-hidden="true">
					<path d="M0 1h9l3 4h18v5H0z" fill="#d79a1f" />
					<path d="M0 6h30v20H0z" fill="#fbc940" />
					<path d="M5 27v-6a2 2 0 0 1 2-2h16a2 2 0 0 1 2 2v6h-4v-3H9v3z" fill="#1d74b4" />
				</svg>
			</AppIcon>
			<AppIcon name="Chrome" running>
				<svg viewBox="0 0 30 30" className="size-[30px]" aria-hidden="true">
					<path d="M15 15 2 7.500a15 15 0 0 1 26 0z" fill="#d63a2e" />
					<path d="M15 15 2 7.500A15 15 0 0 0 15 30l6-11z" fill="#2a9048" />
					<path d="M15 8h13a15 15 0 0 1-13 22l6.500-11.500z" fill="#f4cd3c" />
					<circle cx="15" cy="15" r="7" fill="#fff" />
					<circle cx="15" cy="15" r="5.600" fill="#2f74e0" />
				</svg>
			</AppIcon>
			<AppIcon name="WPS" focused>
				<WpsMark className="h-[22px] w-[31px]" />
			</AppIcon>
			<AppIcon name="爱奇艺">
				<span className="flex size-[30px] flex-col items-center justify-center rounded-md bg-linear-to-br from-[#1fbf62] via-[#27c183] to-[#8a6fe0] text-[10px] font-bold leading-[11px] text-white">
					<span>iQIYI</span>
					<span className="text-[8px]">爱奇艺</span>
				</span>
			</AppIcon>
			<AppIcon name="应用商店">
				<svg viewBox="0 0 28 28" className="size-[28px]" aria-hidden="true">
					<path d="M3 0h22l2 25a2 2 0 0 1-2 2H3a2 2 0 0 1-2-2z" fill="#27c46b" />
					<path d="M8 9c1 6 11 6 12 0" stroke="#fff" strokeWidth="1.800" fill="none" />
					<path d="M21 27c2-3 4-3 6-4v3l-2 1z" fill="#159a4d" />
				</svg>
			</AppIcon>
			<AppIcon name="Docker Desktop" running>
				<DockerIcon />
			</AppIcon>
			<AppIcon name="终端" running>
				<svg viewBox="0 0 30 24" className="h-6 w-[31px]" aria-hidden="true">
					<rect width="30" height="24" rx="2" fill="#333" />
					<path d="M2 0h26a2 2 0 0 1 2 2v2H0V2c0-1 1-2 2-2z" fill="#8d8a88" />
					<path d="m4 8 5 4.500L4 18" stroke="#e8e8e8" strokeWidth="3" fill="none" />
					<path d="M13 18h10" stroke="#fff" strokeWidth="3" />
				</svg>
			</AppIcon>
			<AppIcon name="OBS Studio" running>
				<svg viewBox="0 0 32 32" className="size-[32px]" aria-hidden="true">
					<circle cx="15" cy="18" r="12.500" fill="#1d1b1c" />
					<path
						d="M15 18c-5-1-5-6-2-10M15 18c4-4 8-2 10 2M15 18c1 5-3 8-8 7"
						stroke="#d8d4d2"
						strokeWidth="1.800"
						fill="none"
					/>
					<circle cx="25" cy="7" r="7" fill="#f40d0d" />
				</svg>
			</AppIcon>
		</div>
	);
}

export default function App() {
	return (
		<div className="relative flex h-screen flex-col overflow-hidden bg-linear-to-b from-[#e2e4e1] via-[#e6e5e3] via-35% to-[#ece5e1] to-60% font-['Open_Sans','Noto_Sans_CJK_SC',sans-serif] text-neutral-900">
			<TopTabs />
			<MenuBar />
			<Ribbon />
			<div className="flex min-h-0 flex-1">
				<Sidebar />
				<Doc />
			</div>
			<StatusBar />
			<Taskbar />

			{/* tooltip and pointer over the outline */}
			<div
				role="tooltip"
				className="absolute left-[178px] top-[893px] flex h-[44px] w-[138px] items-center border border-neutral-400 bg-white pl-[13px] text-[15px] text-neutral-500"
			>
				数据治理智能体
			</div>
			<svg
				viewBox="0 0 12 18"
				className="absolute left-[175px] top-[877px] h-[18px] w-3"
				aria-hidden="true"
			>
				<path d="M1 1v14l3-3 2 5 3-1-2-5h4z" fill="#fff" stroke="#444" />
			</svg>

			{/* captions */}
			<div className="absolute left-[49px] top-[351px] flex h-[191px] w-[914px] items-center justify-center gap-10 whitespace-nowrap rounded-3xl bg-[#ffcb35] pb-0.5 pl-8 text-[98px] font-bold leading-none text-black">
				<span>数据治理</span>
				<span>+大模型</span>
			</div>
			<div className="absolute left-[831px] top-[595px] flex h-[128px] w-[556px] items-center justify-center whitespace-nowrap bg-[#c4957d] pb-1 text-[85px] font-bold leading-none text-black">
				应用场景分析
			</div>
			<div className="absolute left-[590px] top-[901px] whitespace-nowrap text-[67px] font-medium leading-none text-white [-webkit-text-stroke:9px_#000] [paint-order:stroke_fill] [stroke-linejoin:round]">
				数据质量检查、数据分析
			</div>
		</div>
	);
}
